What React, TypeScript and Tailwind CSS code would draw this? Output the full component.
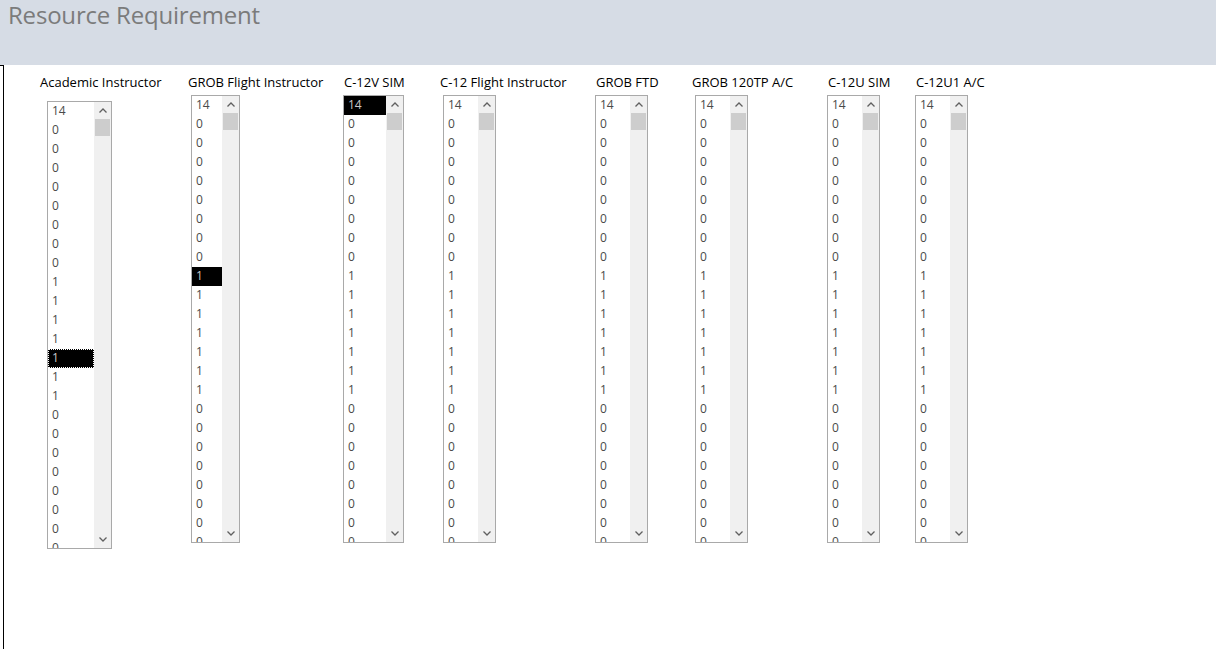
import React from "react";

type Column = {
  label: string;
  width: string; // column slot width
  labelPad: string;
  boxPad: string;
  boxTop: string;
  boxWidth: string;
  selected: number;
  focused?: boolean;
};

const columns: Column[] = [
  { label: "Academic Instructor", width: "w-[148px]", labelPad: "pl-0", boxPad: "pl-[7px]", boxTop: "mt-[10px]", boxWidth: "w-[65px]", selected: 13, focused: true },
  { label: "GROB Flight Instructor", width: "w-[155px]", labelPad: "pl-0", boxPad: "pl-[3px]", boxTop: "mt-[4px]", boxWidth: "w-[49px]", selected: 9 },
  { label: "C-12V SIM", width: "w-[97px]", labelPad: "pl-px", boxPad: "pl-0", boxTop: "mt-[4px]", boxWidth: "w-[61px]", selected: 0 },
  { label: "C-12 Flight Instructor", width: "w-[155px]", labelPad: "pl-0", boxPad: "pl-[3px]", boxTop: "mt-[4px]", boxWidth: "w-[53px]", selected: -1 },
  { label: "GROB FTD", width: "w-[97px]", labelPad: "pl-px", boxPad: "pl-0", boxTop: "mt-[4px]", boxWidth: "w-[53px]", selected: -1 },
  { label: "GROB 120TP A/C", width: "w-[135px]", labelPad: "pl-0", boxPad: "pl-[3px]", boxTop: "mt-[4px]", boxWidth: "w-[53px]", selected: -1 },
  { label: "C-12U SIM", width: "w-[88px]", labelPad: "pl-px", boxPad: "pl-0", boxTop: "mt-[4px]", boxWidth: "w-[53px]", selected: -1 },
  { label: "C-12U1 A/C", width: "w-[100px]", labelPad: "pl-px", boxPad: "pl-0", boxTop: "mt-[4px]", boxWidth: "w-[53px]", selected: -1 },
];

// 14, then eight 0s, seven 1s, then 0s
const values: string[] = [
  "14",
  ...Array(8).fill("0"),
  ...Array(7).fill("1"),
  ...Array(8).fill("0"),
];

function ListBox({ col }: { col: Column }) {
  return (
    <div className={`${col.boxWidth} h-[448px] border border-[#a9a9a9] bg-white flex overflow-hidden`}>
      <div className="flex-1 overflow-hidden">
        {values.map((v, i) => {
          const sel = i === col.selected;
          return (
            <div
              key={i}
              className={`h-[19px] leading-[17px] pl-[4px] text-[12px] ${
                sel ? "bg-black text-[#c8c8c8]" : "text-[#4a4a4a]"
              } ${sel && col.focused ? "outline outline-1 outline-dotted outline-white -outline-offset-1" : ""}`}
            >
              {v}
            </div>
          );
        })}
      </div>
      <div className="w-[17px] h-full bg-[#f0f0f0] flex flex-col items-center shrink-0">
        <div className="h-[17px] w-full flex items-center justify-center">
          <svg width="8" height="5" viewBox="0 0 8 5">
            <path d="M0.5 4.5 L4 1 L7.5 4.5" fill="none" stroke="#606060" strokeWidth="1.3" />
          </svg>
        </div>
        <div className="w-[15px] h-[17px] bg-[#cdcdcd]" />
        <div className="flex-1" />
        <div className="h-[17px] w-full flex items-center justify-center">
          <svg width="8" height="5" viewBox="0 0 8 5">
            <path d="M0.5 0.5 L4 4 L7.5 0.5" fill="none" stroke="#606060" strokeWidth="1.3" />
          </svg>
        </div>
      </div>
    </div>
  );
}

export default function App() {
  return (
    <div
      className="w-[1216px] h-[649px] bg-white overflow-hidden flex flex-col"
      style={{ fontFamily: '"Open Sans", "Noto Sans", sans-serif' }}
    >
      <div className="h-[65px] bg-[#d6dce5] shrink-0 pl-[8px]">
        <h1 className="text-[24px] leading-[30px] text-[#7b7b7b] tracking-[-0.2px]">Resource Requirement</h1>
      </div>
      <div className="flex-1 flex">
        <div className="w-[4px] h-full border-t border-r border-black shrink-0" />
        <div className="flex items-start pl-[36px] pt-[8px]">
          {columns.map((col) => (
            <div key={col.label} className={`${col.width} flex flex-col shrink-0`}>
              <div className={`${col.labelPad} text-[13px] leading-[18px] text-black whitespace-nowrap`}>
                {col.label}
              </div>
              <div className={`${col.boxPad} ${col.boxTop}`}>
                <ListBox col={col} />
              </div>
            </div>
          ))}
        </div>
      </div>
    </div>
  );
}
